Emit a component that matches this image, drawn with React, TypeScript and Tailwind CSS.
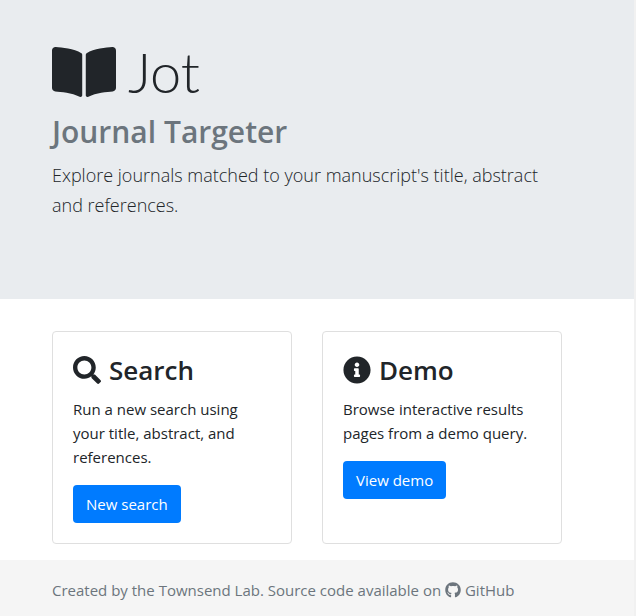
import { FaBookOpen, FaSearch, FaInfoCircle, FaGithub } from "react-icons/fa";
import type { ReactNode } from "react";

function Card({ icon, title, text, action }: { icon: ReactNode; title: string; text: string; action: string }) {
  return (
    <section className="flex flex-col items-start rounded border border-[#dfdfdf] bg-white p-5">
      <h2 className="mb-2 flex items-center gap-2 text-[26px] leading-9 font-semibold">
        {icon}
        {title}
      </h2>
      <p className="mb-4 pt-px text-[15px] leading-6">{text}</p>
      <button type="button" className="h-[38px] rounded bg-[#007bff] px-[13px] text-[15px] leading-6 text-white">
        {action}
      </button>
    </section>
  );
}

export default function App() {
  return (
    <div className="min-h-screen border-r-2 border-[#f1f1f1] bg-white font-['Open_Sans','Noto_Sans',sans-serif] text-[#212529]">
      <header className="bg-[#e9ecef] pt-9 pr-5 pb-[79px]">
        <div className="mx-auto max-w-[540px] px-[15px]">
          <h1 className="mb-1 flex items-center gap-3 font-['Lato','Open_Sans',sans-serif] text-[56px] leading-[72px] font-light">
            <FaBookOpen className="size-16" />
            Jot
          </h1>
          <p className="mb-2 text-[30px] leading-10 font-semibold text-[#6c757d]">Journal Targeter</p>
          <p className="text-lg leading-[30px] font-light">
            Explore journals matched to your manuscript's title, abstract and references.
          </p>
        </div>
      </header>
      <main className="pt-8 pr-5 pb-4">
        <div className="mx-auto grid max-w-[540px] grid-cols-2 gap-[30px] px-[15px]">
          <Card icon={<FaSearch className="size-7" />} title="Search" text="Run a new search using your title, abstract, and references." action="New search" />
          <Card icon={<FaInfoCircle className="size-7" />} title="Demo" text="Browse interactive results pages from a demo query." action="View demo" />
        </div>
      </main>
      <footer className="bg-[#f5f5f5] py-[18px] pr-5 text-[15px] leading-6 text-[#6c757d]">
        <div className="mx-auto max-w-[540px] px-[15px]">
          Created by the Townsend Lab. Source code available on{" "}
          <a href="#github"><FaGithub className="inline size-4 align-[-2px]" /> GitHub</a>
        </div>
      </footer>
    </div>
  );
}
